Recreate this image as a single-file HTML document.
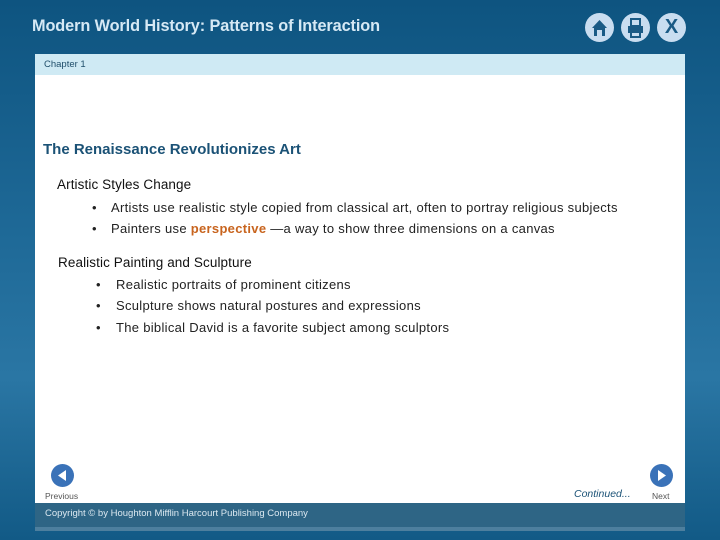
<!DOCTYPE html>
<html><head><style>
*{margin:0;padding:0;box-sizing:border-box}
body{width:720px;height:540px;overflow:hidden;font-family:"Liberation Sans",sans-serif;background:linear-gradient(180deg,#0e5480 0%,#1f6a98 45%,#2a76a4 70%,#125a86 100%);position:relative}
.t{position:absolute;left:32px;top:17px;color:#d6e9f5;font-size:16.3px;font-weight:bold;letter-spacing:-0.1px}
.ic{position:absolute;top:13px;width:29px;height:29px;border-radius:50%;background:#c9ddf0}
.chap{position:absolute;left:35px;top:54px;width:650px;height:21px;background:#cfeaf4;color:#1f4e6a;font-size:9.5px;padding:5px 9px}
.main{position:absolute;left:35px;top:75px;width:650px;height:428px;background:#fff}
.foot{position:absolute;left:35px;top:503px;width:650px;height:24px;background:#2e6585;color:#dbe8f0;font-size:9.5px;padding:5px 10px}
.foot2{position:absolute;left:35px;top:527px;width:650px;height:4px;background:#4d7f9e}
.h{position:absolute;left:43px;top:141px;color:#1b5276;font-size:15px;font-weight:bold}
.p{position:absolute;color:#111;font-size:13.5px;letter-spacing:0.1px}
.b{position:absolute;color:#222;font-size:13px;letter-spacing:0.3px}
.nav{position:absolute;width:23px;height:23px;border-radius:50%;background:#3a72b8}
</style></head><body>
<div class="t">Modern World History: Patterns of Interaction</div>
<div class="ic" style="left:585px"><svg width="29" height="29"><path d="M7 15 L14.5 7 L22 15 L20 15 L20 23 L17 23 L17 17 L12 17 L12 23 L9 23 L9 15Z" fill="#1a5a85"/></svg></div>
<div class="ic" style="left:621px"><svg width="29" height="29"><rect x="10" y="6" width="9" height="7" fill="none" stroke="#1a5a85" stroke-width="2"/><rect x="7" y="13" width="15" height="7" fill="#1a5a85"/><rect x="10" y="19" width="9" height="5" fill="none" stroke="#1a5a85" stroke-width="2"/></svg></div>
<div class="ic" style="left:657px;color:#1a5a85;font-weight:bold;font-size:20px;text-align:center;line-height:29px">X</div>
<div class="chap">Chapter 1</div>
<div class="main"></div>
<div class="h">The Renaissance Revolutionizes Art</div>
<div class="p" style="left:57px;top:177px">Artistic Styles Change</div>
<div class="b" style="left:92px;top:200px">•</div><div class="b" style="left:111px;top:200px">Artists use realistic style copied from classical art, often to portray religious subjects</div>
<div class="b" style="left:92px;top:221px">•</div><div class="b" style="left:111px;top:221px">Painters use <b style="color:#c8641e">perspective</b> —a way to show three dimensions on a canvas</div>
<div class="p" style="left:58px;top:255px">Realistic Painting and Sculpture</div>
<div class="b" style="left:96px;top:277px">•</div><div class="b" style="left:116px;top:277px">Realistic portraits of prominent citizens</div>
<div class="b" style="left:96px;top:298px">•</div><div class="b" style="left:116px;top:298px">Sculpture shows natural postures and expressions</div>
<div class="b" style="left:96px;top:320px">•</div><div class="b" style="left:116px;top:320px">The biblical David is a favorite subject among sculptors</div>
<div class="nav" style="left:51px;top:464px"><svg width="23" height="23"><path d="M7 11.5 L15 6 L15 17Z" fill="#fff"/></svg></div>
<div style="position:absolute;left:45px;top:491px;font-size:8.5px;color:#555">Previous</div>
<div class="nav" style="left:650px;top:464px"><svg width="23" height="23"><path d="M16 11.5 L8 6 L8 17Z" fill="#fff"/></svg></div>
<div style="position:absolute;left:652px;top:491px;font-size:8.5px;color:#555">Next</div>
<div style="position:absolute;left:574px;top:488px;font-size:10.5px;color:#1b5276;font-style:italic">Continued...</div>
<div class="foot">Copyright © by Houghton Mifflin Harcourt Publishing Company</div>
<div class="foot2"></div>
</body></html>
